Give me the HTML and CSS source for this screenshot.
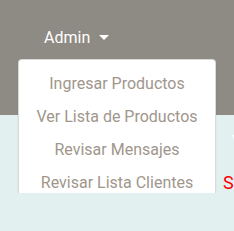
FILE: index.html
```html
<!DOCTYPE html>
<html lang="es">
<head>
    <meta charset="UTF-8">
    <meta name="viewport" content="width=device-width, initial-scale=1.0">
    <title>Admin</title>
    <link rel="stylesheet" href="styles.css">
</head>
<body>
    <nav class="navbar">
        <div class="nav-item">
            <a class="nav-link" href="#">Admin <span class="caret"></span></a>
            <div class="dropdown-menu">
                <a class="dropdown-item" href="#">Ingresar Productos</a>
                <a class="dropdown-item" href="#">Ver Lista de Productos</a>
                <a class="dropdown-item" href="#">Revisar Mensajes</a>
                <a class="dropdown-item" href="#">Revisar Lista Clientes</a>
            </div>
        </div>
    </nav>

    <div class="content">
        <h2 class="welcome">Vista</h2>
        <p class="warning">Sesión</p>
    </div>
</body>
</html>
```

FILE: styles.css
```css
body {
    font-family: Roboto, "Liberation Sans", sans-serif;
    background-color: #e2f0ef;
    margin: 0;
    padding: 0;
    overflow: hidden;
}
.navbar {
    background-color: #8e8a84;
    height: 115px;
    padding: 26px 0 0 44px;
    box-sizing: border-box;
}
.nav-item {
    position: relative;
}
.nav-link {
    color: white;
    font-size: 16px;
    line-height: 24px;
    text-decoration: none;
}
.caret {
    display: inline-block;
    margin-left: 5px;
    vertical-align: 3px;
    border-top: 5px solid white;
    border-left: 5px solid transparent;
    border-right: 5px solid transparent;
}
.dropdown-menu {
    position: absolute;
    top: 33px;
    left: -26px;
    width: 198px;
    box-sizing: border-box;
    padding: 7px 0 9px;
    background-color: white;
    border: 1px solid rgba(0, 0, 0, 0.15);
    border-radius: 4px;
    box-shadow: 0 1px 2px rgba(0, 0, 0, 0.08);
    z-index: 10;
}
.dropdown-item {
    display: block;
    padding: 7px 0;
    line-height: 19px;
    font-size: 16px;
    text-align: center;
    color: #a0968c;
    text-decoration: none;
}
.content {
    padding-left: 232px;
    white-space: nowrap;
}
.welcome {
    color: white;
    font-size: 18px;
    font-weight: normal;
    margin: 16px 0 0;
}
.warning {
    color: red;
    font-size: 18px;
    margin: 20px 0 0 -9px;
}
```
